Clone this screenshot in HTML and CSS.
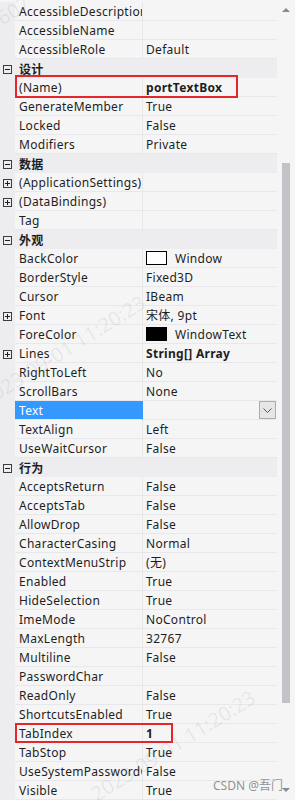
FILE: index.html
```html
<!DOCTYPE html>
<html lang="zh-CN">
<head>
    <meta charset="UTF-8">
    <meta name="viewport" content="width=device-width, initial-scale=1.0">
    <title>属性 - portTextBox</title>
    <link rel="stylesheet" href="styles.css">
</head>
<body>
    <div class="panel">
        <div class="grid">
            <div class="row"><span class="gutter"></span><span class="name">AccessibleDescription</span><span class="value"></span></div>
            <div class="row"><span class="gutter"></span><span class="name">AccessibleName</span><span class="value"></span></div>
            <div class="row"><span class="gutter"></span><span class="name">AccessibleRole</span><span class="value">Default</span></div>

            <div class="row cat"><span class="gutter"><svg class="toggle" width="9" height="9" viewBox="0 0 9 9"><rect x=".5" y=".5" width="8" height="8"/><path d="M2 4.5h5"/></svg></span><span class="name">设计</span></div>
            <div class="row"><span class="gutter"></span><span class="name">(Name)</span><span class="value bold">portTextBox</span></div>
            <div class="row"><span class="gutter"></span><span class="name">GenerateMember</span><span class="value">True</span></div>
            <div class="row"><span class="gutter"></span><span class="name">Locked</span><span class="value">False</span></div>
            <div class="row"><span class="gutter"></span><span class="name">Modifiers</span><span class="value">Private</span></div>

            <div class="row cat"><span class="gutter"><svg class="toggle" width="9" height="9" viewBox="0 0 9 9"><rect x=".5" y=".5" width="8" height="8"/><path d="M2 4.5h5"/></svg></span><span class="name">数据</span></div>
            <div class="row"><span class="gutter"><svg class="toggle" width="9" height="9" viewBox="0 0 9 9"><rect x=".5" y=".5" width="8" height="8"/><path d="M2 4.5h5M4.5 2v5"/></svg></span><span class="name">(ApplicationSettings)</span><span class="value"></span></div>
            <div class="row"><span class="gutter"><svg class="toggle" width="9" height="9" viewBox="0 0 9 9"><rect x=".5" y=".5" width="8" height="8"/><path d="M2 4.5h5M4.5 2v5"/></svg></span><span class="name">(DataBindings)</span><span class="value"></span></div>
            <div class="row"><span class="gutter"></span><span class="name">Tag</span><span class="value"></span></div>

            <div class="row cat"><span class="gutter"><svg class="toggle" width="9" height="9" viewBox="0 0 9 9"><rect x=".5" y=".5" width="8" height="8"/><path d="M2 4.5h5"/></svg></span><span class="name">外观</span></div>
            <div class="row"><span class="gutter"></span><span class="name">BackColor</span><span class="value"><i class="swatch white"></i>Window</span></div>
            <div class="row"><span class="gutter"></span><span class="name">BorderStyle</span><span class="value">Fixed3D</span></div>
            <div class="row"><span class="gutter"></span><span class="name">Cursor</span><span class="value">IBeam</span></div>
            <div class="row"><span class="gutter"><svg class="toggle" width="9" height="9" viewBox="0 0 9 9"><rect x=".5" y=".5" width="8" height="8"/><path d="M2 4.5h5M4.5 2v5"/></svg></span><span class="name">Font</span><span class="value">宋体, 9pt</span></div>
            <div class="row"><span class="gutter"></span><span class="name">ForeColor</span><span class="value"><i class="swatch black"></i>WindowText</span></div>
            <div class="row"><span class="gutter"><svg class="toggle" width="9" height="9" viewBox="0 0 9 9"><rect x=".5" y=".5" width="8" height="8"/><path d="M2 4.5h5M4.5 2v5"/></svg></span><span class="name">Lines</span><span class="value bold">String[] Array</span></div>
            <div class="row"><span class="gutter"></span><span class="name">RightToLeft</span><span class="value">No</span></div>
            <div class="row"><span class="gutter"></span><span class="name">ScrollBars</span><span class="value">None</span></div>
            <div class="row selected"><span class="gutter"></span><span class="name">Text</span><span class="value"><span class="dropdown"><svg width="9" height="5" viewBox="0 0 9 5"><path d="M.5.5l4 4 4-4"/></svg></span></span></div>
            <div class="row"><span class="gutter"></span><span class="name">TextAlign</span><span class="value">Left</span></div>
            <div class="row"><span class="gutter"></span><span class="name">UseWaitCursor</span><span class="value">False</span></div>

            <div class="row cat"><span class="gutter"><svg class="toggle" width="9" height="9" viewBox="0 0 9 9"><rect x=".5" y=".5" width="8" height="8"/><path d="M2 4.5h5"/></svg></span><span class="name">行为</span></div>
            <div class="row"><span class="gutter"></span><span class="name">AcceptsReturn</span><span class="value">False</span></div>
            <div class="row"><span class="gutter"></span><span class="name">AcceptsTab</span><span class="value">False</span></div>
            <div class="row"><span class="gutter"></span><span class="name">AllowDrop</span><span class="value">False</span></div>
            <div class="row"><span class="gutter"></span><span class="name">CharacterCasing</span><span class="value">Normal</span></div>
            <div class="row"><span class="gutter"></span><span class="name">ContextMenuStrip</span><span class="value">(无)</span></div>
            <div class="row"><span class="gutter"></span><span class="name">Enabled</span><span class="value">True</span></div>
            <div class="row"><span class="gutter"></span><span class="name">HideSelection</span><span class="value">True</span></div>
            <div class="row"><span class="gutter"></span><span class="name">ImeMode</span><span class="value">NoControl</span></div>
            <div class="row"><span class="gutter"></span><span class="name">MaxLength</span><span class="value">32767</span></div>
            <div class="row"><span class="gutter"></span><span class="name">Multiline</span><span class="value">False</span></div>
            <div class="row"><span class="gutter"></span><span class="name">PasswordChar</span><span class="value"></span></div>
            <div class="row"><span class="gutter"></span><span class="name">ReadOnly</span><span class="value">False</span></div>
            <div class="row"><span class="gutter"></span><span class="name">ShortcutsEnabled</span><span class="value">True</span></div>
            <div class="row"><span class="gutter"></span><span class="name">TabIndex</span><span class="value bold">1</span></div>
            <div class="row"><span class="gutter"></span><span class="name">TabStop</span><span class="value">True</span></div>
            <div class="row"><span class="gutter"></span><span class="name">UseSystemPasswordChar</span><span class="value">False</span></div>
            <div class="row"><span class="gutter"></span><span class="name">Visible</span><span class="value">True</span></div>

            <!-- annotation boxes -->
            <div class="mark mark-name"></div>
            <div class="mark mark-tab"></div>
        </div>

        <div class="scroll">
            <i class="arrow up"></i>
            <div class="thumb"></div>
            <i class="arrow down"></i>
        </div>

        <span class="wm wm-top">5607</span>
        <span class="wm wm-mid">2023-09-01 11:20:23</span>
        <span class="wm wm-bot">2023-09-01 11:20:23</span>
        <span class="credit">CSDN @吾门</span>
    </div>
</body>
</html>
```

FILE: styles.css
```css
html, body {
    margin: 0;
    padding: 0;
}
body {
    font-family: 'Noto Sans', 'Noto Sans CJK SC', sans-serif;
    font-size: 12px;
    letter-spacing: 0.3px;
    color: #1e1e1e;
    background-color: #f5f5f5;
    width: 295px;
    height: 800px;
    overflow: hidden;
}
.panel {
    position: relative;
    display: flex;
    height: 800px;
    overflow: hidden;
}
.grid {
    position: relative;
    width: 277px;
    padding-top: 2px;
}
.row {
    display: grid;
    grid-template-columns: 15px 128px 134px;
    height: 19px;
}
.gutter {
    background-color: #ededf0;
    display: flex;
    align-items: center;
    padding-left: 3px;
}
.name, .value {
    display: flex;
    align-items: center;
    height: 18px;
    border-bottom: 1px solid #e8e8ec;
    white-space: nowrap;
    overflow: hidden;
}
.name {
    padding-left: 4px;
    border-right: 1px solid #e8e8ec;
}
.value {
    padding-left: 3px;
}
.bold {
    font-weight: bold;
}
.cat {
    background-color: #ededf0;
}
.cat .name {
    grid-column: 2 / 4;
    border: none;
    height: 19px;
    font-weight: bold;
}
.toggle {
    display: block;
    margin-top: 1px;
}
.toggle rect {
    fill: none;
    stroke: #3c3c3c;
}
.toggle path {
    fill: none;
    stroke: #1e1e1e;
}
.selected .name {
    background-color: #3399ff;
    color: #fff;
    border-right-color: #3399ff;
}
.selected .value {
    justify-content: flex-end;
    padding-right: 1px;
}
.dropdown {
    display: flex;
    align-items: center;
    justify-content: center;
    width: 15px;
    height: 16px;
    border: 1px solid #adadad;
    background-color: #e6e6e6;
}
.dropdown path {
    fill: none;
    stroke: #555;
}
.swatch {
    display: inline-block;
    width: 19px;
    height: 12px;
    border: 1px solid #000;
    margin-right: 8px;
}
.swatch.white {
    background-color: #fff;
}
.swatch.black {
    background-color: #000;
}
.mark {
    position: absolute;
    border: 2px solid #e5262b;
    box-sizing: border-box;
}
.mark-name {
    left: 15px;
    top: 75px;
    width: 223px;
    height: 23px;
}
.mark-tab {
    left: 15px;
    top: 723px;
    width: 158px;
    height: 20px;
}
.scroll {
    width: 18px;
    display: flex;
    flex-direction: column;
    align-items: center;
    padding-top: 8px;
    box-sizing: border-box;
}
.arrow {
    width: 0;
    height: 0;
    border-left: 4px solid transparent;
    border-right: 4px solid transparent;
}
.arrow.up {
    border-bottom: 4px solid #868999;
}
.arrow.down {
    border-top: 4px solid #868999;
    margin-top: auto;
    margin-bottom: 8px;
}
.thumb {
    width: 8px;
    height: 540px;
    margin-top: 151px;
    background-color: #c2c3c9;
}
.wm {
    position: absolute;
    font-size: 20px;
    letter-spacing: 0;
    color: rgba(120, 120, 120, 0.12);
    white-space: nowrap;
    transform-origin: left bottom;
    transform: rotate(-32deg);
    pointer-events: none;
}
.wm-top {
    left: -4px;
    top: 10px;
}
.wm-mid {
    left: -10px;
    top: 385px;
}
.wm-bot {
    left: 100px;
    top: 780px;
}
.credit {
    position: absolute;
    right: 12px;
    bottom: 6px;
    font-size: 12px;
    letter-spacing: 0;
    color: rgba(110, 110, 110, 0.75);
}
```
